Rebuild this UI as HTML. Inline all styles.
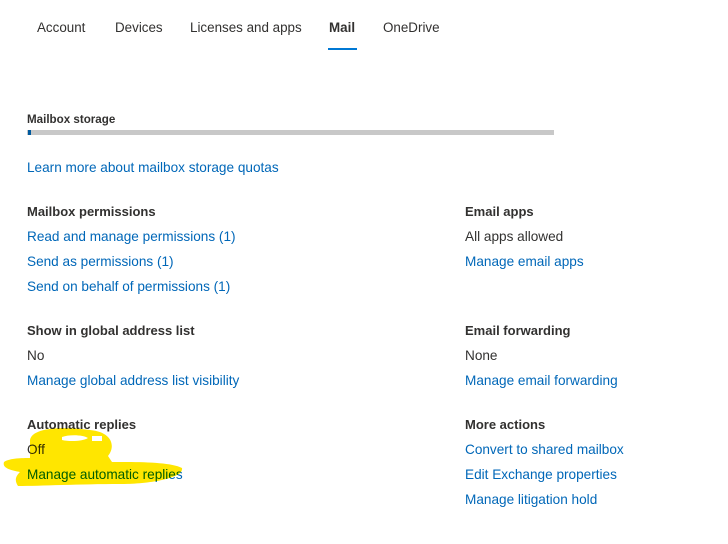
<!DOCTYPE html>
<html><head><style>
body{margin:0;width:728px;height:544px;background:#fff;font-family:"Liberation Sans",sans-serif;font-size:13.6px;color:#323130;position:relative;overflow:hidden}
.a{position:absolute;white-space:nowrap;line-height:16px}
.l{color:#0067b8}
.h{font-weight:bold;color:#323130;font-size:13px}
.tab{position:absolute;top:20px;font-size:13.4px;color:#323130}
</style></head><body>
<div class="tab" style="left:37px">Account</div>
<div class="tab" style="left:115px">Devices</div>
<div class="tab" style="left:190px">Licenses and apps</div>
<div class="tab" style="left:329px;font-weight:bold">Mail</div>
<div class="tab" style="left:383px">OneDrive</div>
<div style="position:absolute;left:328px;top:48px;width:29px;height:2px;background:#0078d4"></div>
<div class="a" style="left:27px;top:112px;font-size:11.6px;font-weight:bold">Mailbox storage</div>
<div style="position:absolute;left:27px;top:130px;width:527px;height:5px;background:#c8c8c8"></div>
<div style="position:absolute;left:28px;top:130px;width:3px;height:5px;background:#005a9e"></div>
<div class="a l" style="left:27px;top:160px">Learn more about mailbox storage quotas</div>

<div class="a h" style="left:27px;top:204px">Mailbox permissions</div>
<div class="a l" style="left:27px;top:229px">Read and manage permissions (1)</div>
<div class="a l" style="left:27px;top:254px">Send as permissions (1)</div>
<div class="a l" style="left:27px;top:279px">Send on behalf of permissions (1)</div>

<div class="a h" style="left:465px;top:204px">Email apps</div>
<div class="a" style="left:465px;top:229px">All apps allowed</div>
<div class="a l" style="left:465px;top:254px">Manage email apps</div>

<div class="a h" style="left:27px;top:323px">Show in global address list</div>
<div class="a" style="left:27px;top:348px">No</div>
<div class="a l" style="left:27px;top:373px">Manage global address list visibility</div>

<div class="a h" style="left:465px;top:323px">Email forwarding</div>
<div class="a" style="left:465px;top:348px">None</div>
<div class="a l" style="left:465px;top:373px">Manage email forwarding</div>

<div class="a h" style="left:27px;top:417px">Automatic replies</div>
<div class="a" style="left:27px;top:442px">Off</div>
<div class="a l" style="left:27px;top:467px">Manage automatic replies</div>

<div class="a h" style="left:465px;top:417px">More actions</div>
<div class="a l" style="left:465px;top:442px">Convert to shared mailbox</div>
<div class="a l" style="left:465px;top:467px">Edit Exchange properties</div>
<div class="a l" style="left:465px;top:492px">Manage litigation hold</div>

<svg style="position:absolute;left:0;top:0;mix-blend-mode:multiply" width="728" height="544">
<g fill="#ffe600">
<path d="M30 440 C32 428 60 426 90 430 C112 432 116 446 108 456 L112 462 C140 462 170 462 182 468 C184 478 150 484 120 484 C80 484 40 486 18 486 C14 480 16 476 20 472 C10 470 2 468 4 462 C10 458 22 458 30 458 Z"/>
</g>
<path d="M62 437 C70 434 84 435 88 438 C84 441 70 442 62 440 Z" fill="#fff"/>
<path d="M92 436 L102 436 L102 441 L92 441 Z" fill="#fff"/>
</svg>
</body></html>
